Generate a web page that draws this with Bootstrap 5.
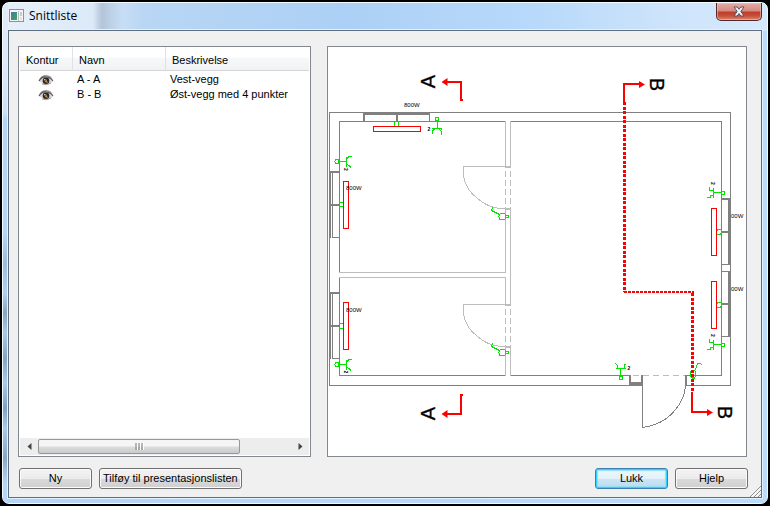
<!DOCTYPE html>
<html lang="no">
<head>
<meta charset="utf-8">
<meta name="viewport" content="width=device-width, initial-scale=1">
<title>Snittliste</title>
<link href="https://cdn.jsdelivr.net/npm/bootstrap@5.3.0/dist/css/bootstrap.min.css" rel="stylesheet">
<style>
body{background:#000;font:11px/15px "Liberation Sans",Arial,sans-serif;color:#000;padding:2px}
.dialog-frame{min-height:calc(100vh - 4px);border:1px solid #f2fbff;border-radius:7px;padding:0 5px 5px;
  background:
    linear-gradient(#dfeaf6 0 60px,#cfdfef 110px,#b3d5f7 116px,#b6d6f8 230px,#9cbcdc 260px,#b0d0f2 290px,#8ba5ba 310px,#a9c9ea 330px,#86a4c4 355px,#a9c9ea 380px,#7f9fc6 405px,#a9c9ea 425px,#8aa6c4 455px,#b6d6f8 480px) left/5px 100% no-repeat,
    linear-gradient(90deg,#a9b9cc00 90px,#a5b6cbb0 99px,#a9bfd7a0 105px,#b5d5f500 120px) top/100% 28px no-repeat,
    linear-gradient(90deg,#e6f0fa 0,#dce9f7 90px,#b9d6f4 140px,#acd0f5 340px,#b6d8fa 520px,#cfe5fb 680px,#d6e9fc 100%) top/100% 28px no-repeat,
    linear-gradient(90deg,#b6d5f5,#bcdcfb)}
.caption-bar{height:27px}
.caption-text{font:12px/16px "Open Sans","Noto Sans",sans-serif;padding-top:5px}
.app-icon{margin-top:6px}
.close-btn{width:46px;height:18px;padding:0;border:1px solid #53282c;border-top:0;border-radius:0 0 5px 5px;background:linear-gradient(#e4aca4 0,#d48a80 8px,#bd3d2c 9px,#c8503a 13px,#dc8a72 17px);box-shadow:inset 0 0 0 1px #f0c3bb90}
.client-area{border:1px solid #5d6f80;background:#f0f0f0;box-shadow:0 0 0 1px #e0f2ff}
.work-area{padding:15px 14px 11px 9px;gap:16px}
.sunken{background:#fff;border:1px solid #828790}
.list-pane{flex:0 0 293px;padding:0 1px 1px}
.view-pane{min-width:0}
.section-table{table-layout:fixed;border-collapse:separate;border-spacing:0}
.section-table th{font-weight:400;height:24px;padding:3px 6px 0;border-bottom:1px solid #d5d5d5;background:linear-gradient(#fff 0 10px,#f7f8fa 11px,#f1f2f4);vertical-align:middle}
.section-table th+th{border-left:1px solid #e0e1e4}
.section-table td{height:15px;padding:0 5px;white-space:nowrap}
.section-table .first-row td{height:16px;padding-top:1px}
.eye{display:block;margin:0 auto}
.scroll-strip{height:17px;background:#ededee}
.scroll-strip button{width:18px;height:17px;padding:0;border:0;background:none;display:flex;align-items:center;justify-content:center}
.scroll-track{flex:1}
.scroll-thumb{width:80%;height:15px;border:1px solid #979797;border-radius:2px;background:linear-gradient(#f5f5f5 0 6px,#dcdcde 7px,#c9cacd)}
.button-row{padding:0 13px 8px 10px;gap:7px}
.win-btn{min-width:73px;height:21px;padding:0 3px;border:1px solid #707070;border-radius:3px;background:linear-gradient(#f3f3f3 0,#ebebeb 10px,#dadada 10px,#cfcfcf 100%);box-shadow:inset 0 0 0 1px #fbfbfb;color:#000;line-height:19px}
.win-btn.default{border-color:#3c7fb1;background:linear-gradient(#eff7fc,#e2f1f9 10px,#cbe5f3 10px,#bbdcee);box-shadow:inset 0 0 0 1px #35d0fb,inset 0 0 1px 2px #8fdff6}
.size-grip{position:absolute;right:0;bottom:0}
.plan{display:block;width:100%;height:auto}
.plan .small-label{font:6px "Liberation Sans",Arial,sans-serif}
.plan .axis-label{font:20px "Liberation Sans",Arial,sans-serif;text-anchor:middle;stroke:#000;stroke-width:.3px}
.plan .count-label{font:bold 5px "Liberation Sans",Arial,sans-serif;text-anchor:middle}
</style>
<script src="https://cdn.jsdelivr.net/npm/bootstrap@5.3.0/dist/js/bootstrap.bundle.min.js"></script>
</head>
<body>
<main class="dialog-frame d-flex flex-column">
  <header class="caption-bar d-flex align-items-start">
    <svg class="app-icon me-1" width="17" height="14" viewBox="0 0 17 14" aria-hidden="true">
      <defs><linearGradient id="appFill" x2="1" y2="1"><stop stop-color="#4c78a8"/><stop offset=".5" stop-color="#3f8f82"/><stop offset="1" stop-color="#4aa456"/></linearGradient></defs>
      <rect x="1.500" y=".5" width="14" height="12" fill="#f6f6f6" stroke="#8e9297"/>
      <rect x="3" y="3" width="6" height="8" fill="url(#appFill)"/><path d="M10.500 2v10" stroke="#b8bcc0"/><rect x="12" y="3" width="2" height="4" fill="#c4cbd2"/><rect x="12" y="8" width="2" height="3" fill="#dfe4e8"/>
    </svg>
    <span class="caption-text">Snittliste</span>
    <button type="button" class="close-btn ms-auto d-flex align-items-center justify-content-center" aria-label="Lukk vindu">
      <svg width="12" height="11" viewBox="0 0 12 11"><path d="M1 1h3.200L6 3.300 7.800 1H11L7.800 5.400 11 10H7.800L6 7.500 4.200 10H1l3.200-4.600z" fill="#f5f5f5" stroke="#505465" stroke-width="1"/></svg>
    </button>
  </header>

  <div class="client-area position-relative flex-grow-1 d-flex flex-column">
    <div class="work-area d-flex flex-grow-1">
      <section class="sunken list-pane d-flex flex-column" aria-label="Snitt">
        <table class="section-table w-100">
          <colgroup><col style="width:52px"><col style="width:93px"><col></colgroup>
          <thead><tr><th scope="col">Kontur</th><th scope="col">Navn</th><th scope="col">Beskrivelse</th></tr></thead>
          <tbody>
            <tr class="first-row"><td><svg class="eye" width="16" height="12" viewBox="0 0 16 12" role="img" aria-label="Synlig"><use href="#eyeShape"/></svg></td><td>A - A</td><td>Vest-vegg</td></tr>
            <tr><td><svg class="eye" width="16" height="12" viewBox="0 0 16 12" role="img" aria-label="Synlig"><use href="#eyeShape"/></svg></td><td>B - B</td><td>Øst-vegg med 4 punkter</td></tr>
          </tbody>
        </table>
        <div class="scroll-strip mt-auto d-flex align-items-center">
          <button type="button" aria-label="Rull til venstre"><svg width="5" height="7" viewBox="0 0 5 7"><path d="M4.500 0v7L.5 3.500z" fill="#444"/></svg></button>
          <div class="scroll-track"><div class="scroll-thumb d-flex align-items-center justify-content-center">
            <svg width="9" height="7" viewBox="0 0 9 7" aria-hidden="true"><path d="M1 0v7M4 0v7M7 0v7" stroke="#777"/><path d="M2.500 0v7M5.500 0v7M8.500 0v7" stroke="#fff"/></svg>
          </div></div>
          <button type="button" aria-label="Rull til høyre"><svg width="5" height="7" viewBox="0 0 5 7"><path d="M.5 0v7l4-3.500z" fill="#444"/></svg></button>
        </div>
      </section>

      <section class="sunken view-pane flex-grow-1" aria-label="Plantegning">
        <svg class="plan" viewBox="328 47 418 409" fill="none">
          <defs>
            <g id="eyeShape">
              <path d="M1 6Q3 1 8 1q6 0 7 6-3-3-7-3T1 6z" fill="#a39a9f"/>
              <path d="M1 7Q4 3 9 3q4 1 6 4-3 4-7 4-4-1-7-4z" fill="#dcd6dc"/>
              <path d="M1 7Q4 2 8 3q4 0 7 4" stroke="#5b5357" stroke-width="1.200" fill="none"/>
              <path d="M4 10q4 2 9-1" stroke="#a59ba0" fill="none"/>
              <circle cx="8" cy="6.800" r="3.300" fill="#2d2722"/><path d="M8 5l2 4-3-1z" fill="#c09449"/><circle cx="6.800" cy="5.800" r=".8" fill="#e9e5e2"/>
            </g>
            <g id="leftSocket"><circle cx="-10" cy="0" r="2"/><path d="M-8 0H0M-.5-5V5M0-3l2-2h3M0 3l2 1 2 2"/></g>
            <g id="rightSocket"><path d="M8.500-1.500h3v3h-3zM8 0H1M.5-5V5M0-2h-3l-1-3M0 3h-2l-1 2h-3"/></g>
            <g id="doorLamp"><circle cx="0" cy="0" r="3.500"/><path d="M-10-9l-1 3 8 4M3-1h3v2H3M-2 3h4"/></g>
          </defs>

          <g stroke="#808080" shape-rendering="crispEdges">
            <path d="M642 385.500H329.500V112.500H730.500V385.500H686"/>
            <path d="M505 121.500H339.500V272M339.500 277V375.500H505M511 121.500H721.500V375.500H686M511 375.500H630"/>
            <path d="M363 113.500H430" stroke-width="3"/><path d="M364 113V122M397 113V122" stroke-width="2"/><path d="M429.500 113V122"/>
            <path d="M332.500 172V237.500H339M332.500 293V358.500H339"/>
            <path d="M330 172H339M330 205H339M330 293H339M330 326H339M330 172V238M330 293V359" stroke-width="2"/>
            <path d="M722 264.500H730M722 271.500H730M722 336.500H730"/>
            <path d="M722 199H730M722 232H730M722 304H730" stroke-width="2"/>
            <path d="M729.500 198V265M729.500 271V337" stroke-width="3"/>
            <path d="M630 375V385M642 375V385M686 375V386" stroke-width="2"/><path d="M629 383.500H643" stroke-width="3"/>
            <path d="M642.500 385V427.500Q656 426 667 418Q684 404 685.500 386"/>
          </g>

          <g stroke="#bdbdbd" shape-rendering="crispEdges">
            <path d="M505.500 121V167M510.500 121V167M505.500 210V272.500H339M339 277.500H505.500V304M510.500 210V304M505.500 347V376M510.500 347V376"/>
            <path d="M505.500 171V210M510.500 171V210M505.500 309V347M510.500 309V347" stroke-dasharray="6 3"/>
            <path d="M633 375.500H685" stroke-dasharray="6 4"/>
            <path d="M505 167H511M505 209H511M505 304.500H511M505 346.500H511" stroke-width="2"/>
            <path d="M505 166.500H463.500V176Q466 190 477 198Q485 205 493 207T505 209"/>
            <path d="M505 304.500H463.500V314Q466 328 477 336Q485 343 493 345T505 346.500"/>
          </g>

          <g stroke="#00e600" shape-rendering="crispEdges">
            <path d="M394.500 122V126M398.500 122V126M339 202.500H343M339 206.500H343M339 323.500H343M339 328.500H343"/>
            <circle cx="719" cy="232" r="2.500"/><circle cx="719" cy="305" r="2.500"/>
            <use href="#leftSocket" x="347" y="161.500"/><use href="#leftSocket" x="347" y="364.500"/>
            <use href="#rightSocket" x="713" y="192.500"/><use href="#rightSocket" x="713" y="344.500"/>
            <circle cx="437" cy="119" r="2"/><path d="M437.500 121V128M432 128.500H442M435 129l-3 2v3M439 129l2 2v4M433 128v2M441 128v2"/>
            <path d="M619.500 376h3v3h-3zM620.500 376V369M616 368.500H626M617 368v-3l-2-2M624 368v-3l2-1"/>
            <use href="#doorLamp" x="502.500" y="216.500"/><use href="#doorLamp" x="502.500" y="352.500"/>
            <ellipse cx="693" cy="374" rx="2.500" ry="4"/><path d="M695 370l3-7h2l2 2M692 378h3"/>
          </g>

          <g stroke="#f00" shape-rendering="crispEdges">
            <path d="M373.500 126.500h47v5h-47zM343.500 181.500h5v47h-5zM343.500 302.500h5v47h-5zM711.500 208.500h5v47h-5zM711.500 281.500h5v47h-5z"/>
            <path d="M463 100H461V82H447M463 395H461V414H447M624 103V84H641M692 392V412H708" stroke-width="2"/>
            <path d="M624.500 102V292M692.500 293V392" stroke-width="3" stroke-dasharray="3 1.500"/>
            <path d="M624 292H694" stroke-width="2" stroke-dasharray="3 1"/>
          </g>
          <path d="M441.500 82l6-4v8zM441.500 414l6-4v8zM645 84.500l-6-3.500v7zM713 412.500l-6-3.500v7z" fill="#f00"/>

          <g fill="#000">
            <text class="axis-label" transform="translate(435 81.500) rotate(-90)">A</text>
            <text class="axis-label" transform="translate(435 413.500) rotate(-90)">A</text>
            <text class="axis-label" transform="translate(650 84.500) rotate(90)">B</text>
            <text class="axis-label" transform="translate(718 412.500) rotate(90)">B</text>
            <text class="small-label" x="404" y="107">800W</text>
            <text class="small-label" x="346" y="190">800W</text>
            <text class="small-label" x="346" y="312">800W</text>
            <text class="small-label" x="731" y="218">00W</text>
            <text class="small-label" x="731" y="291">00W</text>
            <text class="count-label" x="429" y="131">2</text>
            <text class="count-label" transform="translate(344 169.500) rotate(90)">2</text>
            <text class="count-label" transform="translate(344 372) rotate(90)">2</text>
            <text class="count-label" transform="translate(711 183.500) rotate(90)">2</text>
            <text class="count-label" transform="translate(711 335.500) rotate(90)">2</text>
            <text class="count-label" x="629" y="370">2</text>
          </g>
        </svg>
      </section>
    </div>

    <footer class="button-row d-flex">
      <button type="button" class="win-btn">Ny</button>
      <button type="button" class="win-btn">Tilføy til presentasjonslisten</button>
      <button type="button" class="win-btn default ms-auto">Lukk</button>
      <button type="button" class="win-btn">Hjelp</button>
    </footer>
    <svg class="size-grip" width="12" height="12" viewBox="0 0 12 12" aria-hidden="true"><path d="M1 12L12 1M5 12l7-7M9 12l3-3" stroke="#909090"/><path d="M2.500 12L12 2.500M6.500 12L12 6.500" stroke="#fff"/></svg>
  </div>
</main>
</body>
</html>
